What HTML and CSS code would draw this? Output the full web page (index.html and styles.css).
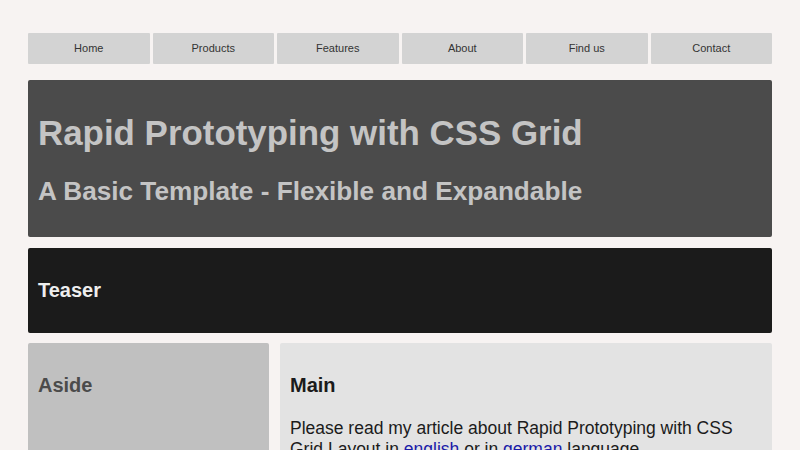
FILE: index.html
```html
<!DOCTYPE html>
<html lang="en">
<head>
<meta charset="utf-8">
<title>Rapid Prototyping with CSS Grid</title>
<link rel="stylesheet" href="styles.css">
</head>
<body>
<div class="page">
  <nav class="nav">
    <a class="nav-item" href="#">Home</a>
    <a class="nav-item" href="#">Products</a>
    <a class="nav-item" href="#">Features</a>
    <a class="nav-item" href="#">About</a>
    <a class="nav-item" href="#">Find us</a>
    <a class="nav-item" href="#">Contact</a>
  </nav>
  <header class="header">
    <h1 class="title">Rapid Prototyping with CSS Grid</h1>
    <h2 class="subtitle">A Basic Template - Flexible and Expandable</h2>
  </header>
  <section class="teaser">
    <h2 class="box-title">Teaser</h2>
  </section>
  <div class="content">
    <aside class="aside">
      <h2 class="box-title">Aside</h2>
    </aside>
    <main class="main">
      <h2 class="box-title">Main</h2>
      <p class="text">Please read my article about Rapid Prototyping with CSS Grid Layout in <a class="link" href="#">english</a> or in <a class="link" href="#">german</a> language.</p>
    </main>
  </div>
</div>
</body>
</html>
```
FILE: styles.css
```css
html, body {
  margin: 0;
  padding: 0;
}
body {
  background: #f7f3f2;
  font-family: "Liberation Sans", Arial, sans-serif;
  color: #1b1b1b;
}
.page {
  padding: 33px 28px 0;
  display: flex;
  flex-direction: column;
}
.nav {
  display: grid;
  grid-template-columns: repeat(6, 1fr);
  gap: 3px;
  margin-bottom: 16px;
}
.nav-item {
  display: flex;
  align-items: center;
  justify-content: center;
  height: 31px;
  padding-bottom: 1px;
  box-sizing: border-box;
  background: #d3d3d3;
  color: #333;
  font-size: 11px;
  text-decoration: none;
  border-radius: 1px;
}
.header {
  background: #4b4b4b;
  color: #c4c4c4;
  padding: 10px;
  border-radius: 2px;
  margin-bottom: 11px;
}
.title {
  font-size: 34.9px;
  margin: 23.3px 0 22.4px;
}
.subtitle {
  font-size: 26.2px;
  margin: 0 0 20.5px;
}
.teaser {
  background: #1b1b1b;
  color: #eeeeee;
  padding: 10px;
  border-radius: 2px;
  margin-bottom: 10px;
}
.box-title {
  font-size: 20px;
  margin: 21px 0;
}
.content {
  display: grid;
  grid-template-columns: 241px 1fr;
  gap: 11px;
}
.aside {
  background: #c0c0c0;
  color: #4b4b4b;
  padding: 10px;
  min-height: 200px;
  border-radius: 2px;
}
.main {
  background: #e3e3e3;
  color: #1b1b1b;
  padding: 10px;
  border-radius: 2px;
}
.text {
  font-size: 17.5px;
  margin: 0;
}
.link {
  color: #1a1aa8;
}
```
